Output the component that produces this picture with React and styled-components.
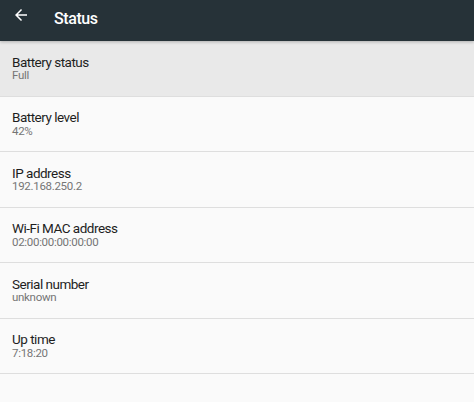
import React from "react";
import styled, { createGlobalStyle } from "styled-components";

const Global = createGlobalStyle`
  html, body { margin: 0; padding: 0; background: #fafafa; }
  body { font-family: Roboto, "Noto Sans", "Liberation Sans", sans-serif; }
  #root { min-height: 402px; }
`;

const Page = styled.div`
  width: 474px;
  height: 402px;
  background: #fafafa;
  overflow: hidden;
  display: flex;
  flex-direction: column;
`;

const Header = styled.header`
  position: relative;
  z-index: 1;
  height: 41px;
  flex: 0 0 41px;
  background: #263238;
  display: flex;
  align-items: flex-start;
  box-shadow: 0 1px 3px rgba(0, 0, 0, 0.25);
`;

const BackButton = styled.button`
  width: 54px;
  height: 41px;
  padding: 5.5px 0 0 12px;
  margin: 0;
  border: 0;
  background: transparent;
  display: flex;
  align-items: flex-start;
  justify-content: flex-start;
  color: #ffffff;
  svg { display: block; }
`;

const Title = styled.h1`
  margin: 10.8px 0 0;
  font-size: 16px;
  line-height: 16px;
  font-weight: 500;
  letter-spacing: -0.4px;
  color: #ffffff;
`;

const List = styled.ul`
  list-style: none;
  margin: 0;
  padding: 0;
`;

const Row = styled.li`
  box-sizing: border-box;
  height: 55.5px;
  padding: 13.9px 12px 0;
  border-bottom: 1px solid #dedede;
  background: ${(p) => (p.$active ? "#e9e9e9" : "#fafafa")};
  display: flex;
  flex-direction: column;
`;

const RowTitle = styled.div`
  font-size: 13.5px;
  line-height: 14px;
  letter-spacing: -0.5px;
  color: #1e1e1e;
`;

const RowSub = styled.div`
  margin-top: 0.6px;
  font-size: 11.5px;
  line-height: 12px;
  letter-spacing: -0.3px;
  color: #757575;
`;

const items = [
  { title: "Battery status", sub: "Full", active: true },
  { title: "Battery level", sub: "42%" },
  { title: "IP address", sub: "192.168.250.2" },
  { title: "Wi-Fi MAC address", sub: "02:00:00:00:00:00" },
  { title: "Serial number", sub: "unknown" },
  { title: "Up time", sub: "7:18:20" },
];

export default function App() {
  return (
    <>
      <Global />
      <Page>
        <Header>
          <BackButton aria-label="Back">
            <svg width="18" height="18" viewBox="0 0 24 24" fill="currentColor">
              <path d="M20 11H7.83l5.59-5.59L12 4l-8 8 8 8 1.41-1.41L7.83 13H20v-2z" />
            </svg>
          </BackButton>
          <Title>Status</Title>
        </Header>
        <List>
          {items.map((it) => (
            <Row key={it.title} $active={it.active}>
              <RowTitle>{it.title}</RowTitle>
              <RowSub>{it.sub}</RowSub>
            </Row>
          ))}
        </List>
      </Page>
    </>
  );
}
